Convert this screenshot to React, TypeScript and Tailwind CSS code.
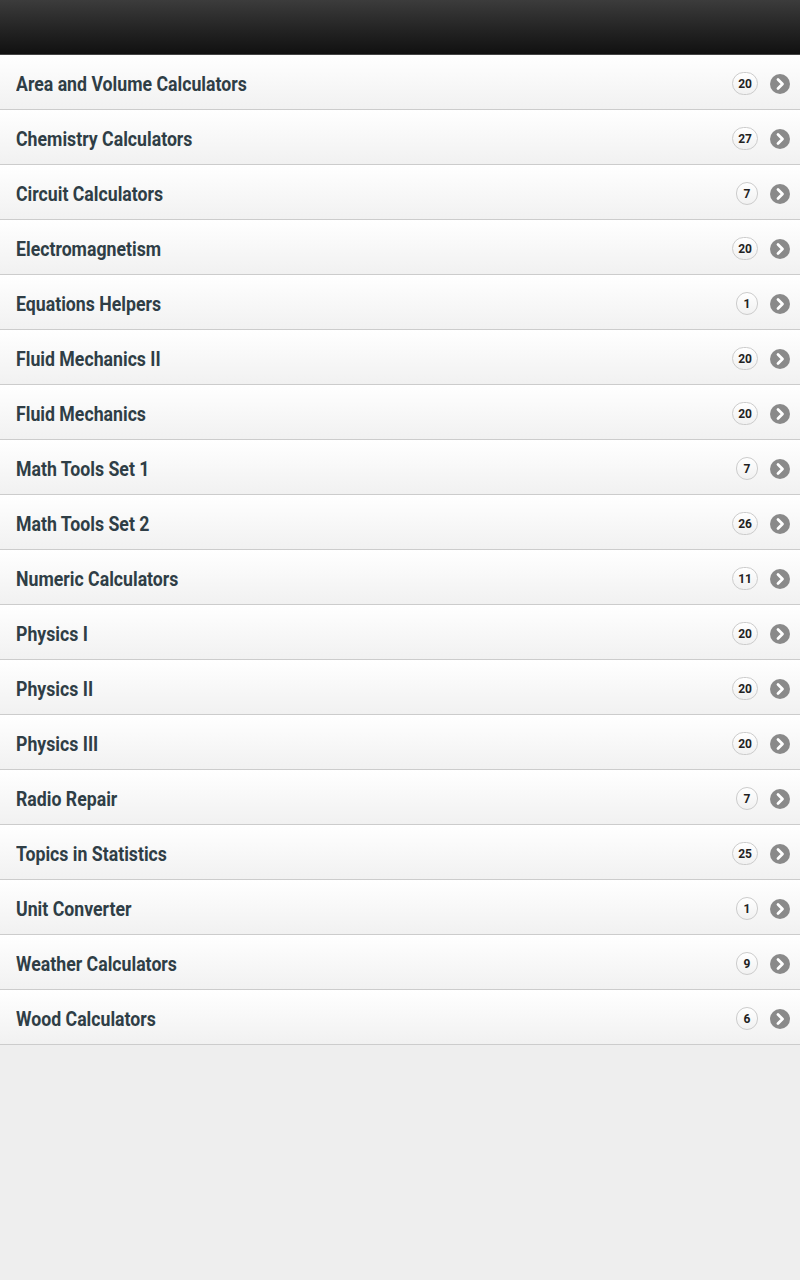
const items: [string, number][] = [
  ['Area and Volume Calculators', 20],
  ['Chemistry Calculators', 27],
  ['Circuit Calculators', 7],
  ['Electromagnetism', 20],
  ['Equations Helpers', 1],
  ['Fluid Mechanics II', 20],
  ['Fluid Mechanics', 20],
  ['Math Tools Set 1', 7],
  ['Math Tools Set 2', 26],
  ['Numeric Calculators', 11],
  ['Physics I', 20],
  ['Physics II', 20],
  ['Physics III', 20],
  ['Radio Repair', 7],
  ['Topics in Statistics', 25],
  ['Unit Converter', 1],
  ['Weather Calculators', 9],
  ['Wood Calculators', 6],
]

function Arrow() {
  return (
    <svg width="20" height="20" viewBox="0 0 20 20">
      <circle cx="10" cy="10" r="10" fill="#8a8a8a" />
      <path d="M8 5.5 L12.5 10 L8 14.5" fill="none" stroke="#fff" strokeWidth="2.8" strokeLinecap="round" strokeLinejoin="round" />
    </svg>
  )
}

export default function App() {
  return (
    <div className="min-h-[1280px] bg-[#eeeeee]" style={{ fontFamily: 'Roboto, "Liberation Sans", sans-serif' }}>
      <div className="h-[55px] bg-gradient-to-b from-[#3c3c3c] to-[#111111] border-b border-[#444]" />
      <ul>
        {items.map(([name, count]) => (
          <li
            key={name}
            className="h-[55px] flex items-center pl-4 pr-[10px] pt-[3px] bg-gradient-to-b from-[#ffffff] to-[#f1f1f1] border-b border-[#cccccc]"
          >
            <div className="flex-1">
              <span className="inline-block origin-left scale-x-[0.885] text-[20px] font-bold text-[#2f3e46] whitespace-nowrap">
                {name}
              </span>
            </div>
            <span className="min-w-[22px] h-[23px] px-[5px] rounded-full border border-[#cccccc] bg-gradient-to-b from-[#ffffff] to-[#f1f1f1] text-[12px] font-bold text-[#222] flex items-center justify-center">
              {count}
            </span>
            <span className="ml-[12px]">
              <Arrow />
            </span>
          </li>
        ))}
      </ul>
    </div>
  )
}
